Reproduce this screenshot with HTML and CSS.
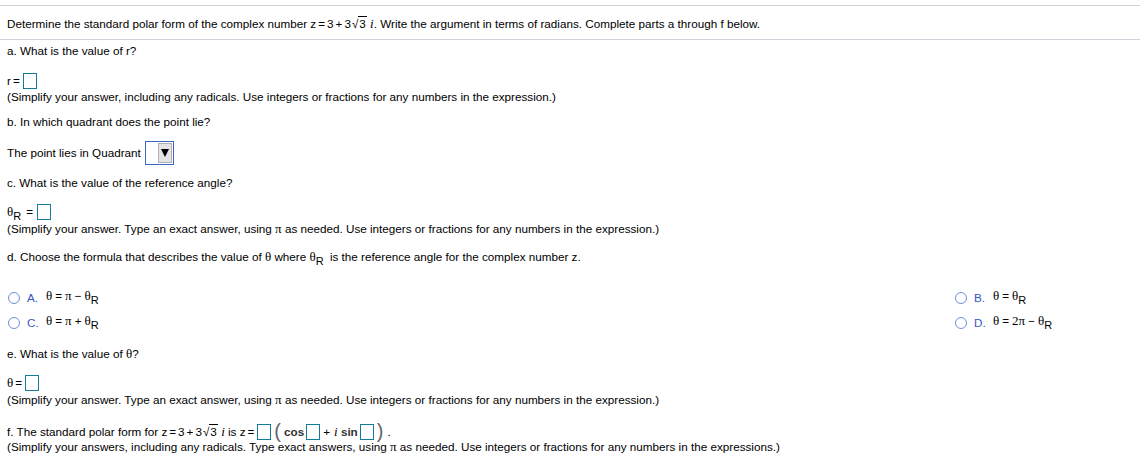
FILE: index.html
```html
<!DOCTYPE html>
<html>
<head>
<meta charset="utf-8">
<link rel="stylesheet" href="styles.css">
</head>
<body>
<div class="header">Determine the standard polar form of the complex number z<span class="op">=</span>3<span class="op">+</span>3<span class="rad">√<span class="rc">3</span></span> <i class="im">i</i>. Write the argument in terms of radians. Complete parts a through f below.</div>
<div class="content">
  <p class="q qa">a. What is the value of r?</p>
  <div class="row r1">r<span class="op">=</span><span class="box"></span></div>
  <p class="note n1">(Simplify your answer, including any radicals. Use integers or fractions for any numbers in the expression.)</p>
  <p class="q qb">b. In which quadrant does the point lie?</p>
  <div class="row r2">The point lies in Quadrant<span class="select"><span class="btn"><span class="tri"></span></span></span></div>
  <p class="q qc">c. What is the value of the reference angle?</p>
  <div class="row r3"><span class="th">θ</span><span class="sr">R</span><span class="op op2">=</span><span class="box"></span></div>
  <p class="note n2">(Simplify your answer. Type an exact answer, using <span class="pi">π</span> as needed. Use integers or fractions for any numbers in the expression.)</p>
  <p class="q qd">d. Choose the formula that describes the value of <span class="th">θ</span> where <span class="th">θ</span><span class="sr">R</span> is the reference angle for the complex number z.</p>
  <div class="opts">
    <div class="opt"><span class="radio"></span><span class="lt">A.</span><span class="fm"><span class="th">θ</span><span class="op">=</span><span class="pi">π</span><span class="op">−</span><span class="th">θ</span><span class="sr">R</span></span></div>
    <div class="opt"><span class="radio"></span><span class="lt">B.</span><span class="fm"><span class="th">θ</span><span class="op">=</span><span class="th">θ</span><span class="sr">R</span></span></div>
    <div class="opt"><span class="radio"></span><span class="lt">C.</span><span class="fm"><span class="th">θ</span><span class="op">=</span><span class="pi">π</span><span class="op">+</span><span class="th">θ</span><span class="sr">R</span></span></div>
    <div class="opt"><span class="radio"></span><span class="lt">D.</span><span class="fm"><span class="th">θ</span><span class="op">=</span><span class="pi">2π</span><span class="op">−</span><span class="th">θ</span><span class="sr">R</span></span></div>
  </div>
  <p class="q qe">e. What is the value of <span class="th">θ</span>?</p>
  <div class="row r4"><span class="th">θ</span><span class="op">=</span><span class="box"></span></div>
  <p class="note n3">(Simplify your answer. Type an exact answer, using <span class="pi">π</span> as needed. Use integers or fractions for any numbers in the expression.)</p>
  <div class="row r5">f. The standard polar form for z<span class="op">=</span>3<span class="op">+</span>3<span class="rad">√<span class="rc">3</span></span>&nbsp;<i class="im">i</i>&nbsp;is z<span class="op">=</span><span class="box"></span><span class="paren">(</span><b class="fn">cos</b><span class="box"></span><span class="op op3">+</span><i class="im">i</i>&nbsp;<b class="fn">sin</b><span class="box"></span><span class="paren">)</span><span class="dot">.</span></div>
  <p class="note n4">(Simplify your answers, including any radicals. Type exact answers, using <span class="pi">π</span> as needed. Use integers or fractions for any numbers in the expressions.)</p>
</div>
</body>
</html>
```
FILE: styles.css
```css
html, body {
  margin: 0;
  padding: 0;
  background: #fff;
}
body {
  font-family: "Liberation Sans", Arial, sans-serif;
  font-size: 11.7px;
  line-height: 14px;
  color: #000;
  width: 1140px;
  overflow: hidden;
}
.header {
  margin-top: 5px;
  border-top: 1px solid #d2d2dc;
  border-bottom: 1px solid #d2d2dc;
  padding: 11px 0 8px 7px;
  height: 14px;
  white-space: nowrap;
}
.content {
  padding-left: 7px;
}
p {
  margin: 0;
  white-space: nowrap;
}
.row {
  display: flex;
  align-items: center;
  white-space: nowrap;
  height: 16px;
}
.op {
  margin: 0 2px;
}
.op2 {
  margin: 0 3px 0 5px;
}
.op3 {
  margin: 0 4px 0 3px;
}
.im {
  font-family: "Liberation Serif", "Times New Roman", serif;
  font-style: italic;
  font-size: 13px;
}
.rad {
  display: inline-block;
  margin-left: 1px;
}
.rc {
  border-top: 1px solid #000;
  padding: 0 1px;
}
.th, .pi {
  font-family: "Liberation Serif", "Times New Roman", serif;
  font-size: 13px;
}
.sr {
  display: inline-block;
  font-size: 11px;
  position: relative;
  top: 4px;
  line-height: 10px;
}
.box {
  display: inline-block;
  width: 12px;
  height: 14px;
  border: 1px solid #137a9c;
  background: #fff;
  margin-left: 1px;
}
.qa { margin-top: 4px; }
.r1 { margin-top: 15px; }
.n1 { margin-top: 1px; }
.qb { margin-top: 11px; }
.r2 { margin-top: 12px; height: 24px; }
.qc { margin-top: 11px; }
.r3 { margin-top: 14px; }
.n2 { margin-top: 2px; }
.qd { margin-top: 14px; }
.qd .sr { margin-right: 3px; }
.opts {
  margin-top: 27px;
  padding-left: 1px;
  display: grid;
  grid-template-columns: 947px auto;
  row-gap: 11px;
}
.opt {
  display: flex;
  align-items: center;
  height: 14px;
  white-space: nowrap;
}
.radio {
  display: inline-block;
  width: 10px;
  height: 10px;
  border: 1px solid #6e8fd6;
  border-radius: 50%;
  margin-right: 7px;
}
.lt {
  color: #3556c4;
  width: 16px;
}
.fm {
  display: inline-block;
  margin-left: 3px;
  position: relative;
  top: -2px;
}
.fm .op { margin: 0 3px; }
.qe { margin-top: 17px; }
.r4 { margin-top: 14px; }
.n3 { margin-top: 2px; }
.r5 { margin-top: 17px; }
.n4 { margin-top: 0; }
.select {
  display: inline-flex;
  align-items: center;
  justify-content: flex-end;
  width: 26px;
  height: 22px;
  border: 1px solid #3a66cc;
  margin-left: 4px;
  padding-right: 1px;
  box-sizing: content-box;
}
.btn {
  display: flex;
  align-items: center;
  justify-content: center;
  width: 12px;
  height: 18px;
  background: #e4e4e4;
  border: 1px solid #b0b0b0;
}
.tri {
  width: 0;
  height: 0;
  border-left: 4px solid transparent;
  border-right: 4px solid transparent;
  border-top: 8px solid #000;
}
.paren {
  font-size: 20px;
  color: #666;
  margin: 0 3px 0 3px;
  position: relative;
  top: -1px;
  font-weight: 300;
}
.fn {
  font-weight: bold;
  color: #333;
  margin-right: 1px;
}
.dot {
  margin-left: 1px;
}
```
